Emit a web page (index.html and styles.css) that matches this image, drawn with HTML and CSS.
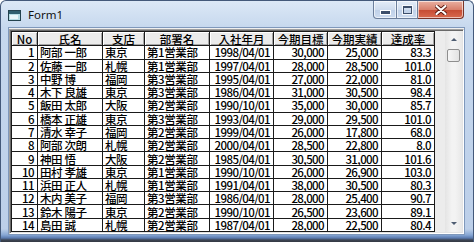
FILE: index.html
```html
<!DOCTYPE html>
<html lang="ja">

<head>
  <meta charset="UTF-8">
  <title>Form1</title>
  <link rel="stylesheet" href="styles.css">
</head>

<body>

  <div class="window">
    <div class="titlebar">
      <svg class="form-icon" width="13" height="11" viewBox="0 0 13 11">
        <rect x="0.5" y="0.5" width="12" height="10" fill="#b7dde4" stroke="#23424e"/>
        <rect x="1" y="1" width="11" height="3" fill="#2f5f6e"/>
        <rect x="2" y="5" width="8" height="4" fill="#e9f6f8"/>
      </svg>
      <span class="caption">Form1</span>
      <div class="caption-buttons">
        <div class="cbtn min"><span class="glyph-min"></span></div>
        <div class="cbtn max"><span class="glyph-max"></span></div>
        <div class="cbtn close">
          <svg width="12" height="10" viewBox="0 0 12 10">
            <path d="M1.5 1 L10.5 9 M10.5 1 L1.5 9" stroke="#5a1a10" stroke-width="4" stroke-linecap="round"/>
            <path d="M1.5 1 L10.5 9 M10.5 1 L1.5 9" stroke="#ffffff" stroke-width="2.2" stroke-linecap="round"/>
          </svg>
        </div>
      </div>
    </div>

    <div class="client">
      <div class="grid">
        <div class="cells">
          <table class="flex">
            <colgroup>
              <col style="width:26px">
              <col style="width:65px">
              <col style="width:42px">
              <col style="width:65px">
              <col style="width:64px">
              <col style="width:54px">
              <col style="width:54px">
              <col style="width:53px">
            </colgroup>
            <thead>
              <tr>
                <th>No</th><th>氏名</th><th>支店</th><th>部署名</th><th>入社年月</th><th>今期目標</th><th>今期実績</th><th>達成率</th>
              </tr>
            </thead>
            <tbody>
              <tr><td class="num">1</td><td>阿部 一郎</td><td>東京</td><td>第1営業部</td><td class="num">1998/04/01</td><td class="num">30,000</td><td class="num">25,000</td><td class="num">83.3</td></tr>
              <tr><td class="num">2</td><td>佐藤 一郎</td><td>札幌</td><td>第1営業部</td><td class="num">1997/04/01</td><td class="num">28,000</td><td class="num">28,500</td><td class="num">101.0</td></tr>
              <tr><td class="num">3</td><td>中野 博</td><td>福岡</td><td>第3営業部</td><td class="num">1995/04/01</td><td class="num">27,000</td><td class="num">22,000</td><td class="num">81.0</td></tr>
              <tr><td class="num">4</td><td>木下 良雄</td><td>東京</td><td>第3営業部</td><td class="num">1986/04/01</td><td class="num">31,000</td><td class="num">30,500</td><td class="num">98.4</td></tr>
              <tr><td class="num">5</td><td>飯田 太郎</td><td>大阪</td><td>第2営業部</td><td class="num">1990/10/01</td><td class="num">35,000</td><td class="num">30,000</td><td class="num">85.7</td></tr>
              <tr><td class="num">6</td><td>橋本 正雄</td><td>東京</td><td>第3営業部</td><td class="num">1993/04/01</td><td class="num">29,000</td><td class="num">29,500</td><td class="num">101.0</td></tr>
              <tr><td class="num">7</td><td>清水 幸子</td><td>福岡</td><td>第2営業部</td><td class="num">1999/04/01</td><td class="num">26,000</td><td class="num">17,800</td><td class="num">68.0</td></tr>
              <tr><td class="num">8</td><td>阿部 次朗</td><td>札幌</td><td>第2営業部</td><td class="num">2000/04/01</td><td class="num">28,500</td><td class="num">22,800</td><td class="num">8.0</td></tr>
              <tr><td class="num">9</td><td>神田 悟</td><td>大阪</td><td>第2営業部</td><td class="num">1985/04/01</td><td class="num">30,500</td><td class="num">31,000</td><td class="num">101.6</td></tr>
              <tr><td class="num">10</td><td>田村 孝雄</td><td>東京</td><td>第1営業部</td><td class="num">1990/10/01</td><td class="num">26,000</td><td class="num">26,900</td><td class="num">103.0</td></tr>
              <tr><td class="num">11</td><td>浜田 正人</td><td>札幌</td><td>第1営業部</td><td class="num">1991/04/01</td><td class="num">38,000</td><td class="num">30,500</td><td class="num">80.3</td></tr>
              <tr><td class="num">12</td><td>木内 美子</td><td>福岡</td><td>第3営業部</td><td class="num">1986/04/01</td><td class="num">28,000</td><td class="num">25,400</td><td class="num">90.7</td></tr>
              <tr><td class="num">13</td><td>鈴木 陽子</td><td>東京</td><td>第2営業部</td><td class="num">1990/10/01</td><td class="num">26,500</td><td class="num">23,600</td><td class="num">89.1</td></tr>
              <tr><td class="num">14</td><td>島田 誠</td><td>札幌</td><td>第2営業部</td><td class="num">1987/04/01</td><td class="num">28,000</td><td class="num">22,500</td><td class="num">80.4</td></tr>
            </tbody>
          </table>
        </div>

        <div class="vscroll">
          <div class="sbtn"><span class="arrow-up"></span></div>
          <div class="track">
            <div class="thumb"></div>
          </div>
          <div class="sbtn"><span class="arrow-down"></span></div>
        </div>
      </div>
    </div>
  </div>

</body>

</html>
```

FILE: styles.css
```css
body {
  margin: 0;
  background-color: #ffffff;
  font-family: "Noto Sans CJK JP", "Noto Sans", sans-serif;
  color: #000;
}

/* ventana */
.window {
  width: 474px;
  height: 242px;
  box-sizing: border-box;
  display: flex;
  flex-direction: column;
  padding: 0 8px 7px 7px;
  border: 1px solid #44597a;
  border-bottom: none;
  border-radius: 6px 6px 0 0;
  background: linear-gradient(#dce8f6 0, #c6d8ee 27px, #bccfe9 228px, #86a6d4 234px, #5b7bb0 237px, #3c4452 239px, #2f343c 242px);
}

.titlebar {
  height: 27px;
  display: flex;
  align-items: center;
}

.form-icon {
  margin-top: 2px;
}

.caption {
  margin-left: 7px;
  font-family: "Noto Sans", sans-serif;
  font-size: 11.5px;
  color: #111;
}

.caption-buttons {
  margin-left: auto;
  margin-right: 1px;
  align-self: flex-start;
  display: flex;
  height: 18px;
}

.cbtn {
  box-sizing: border-box;
  height: 18px;
  display: flex;
  align-items: center;
  justify-content: center;
  border: 1px solid #6c7f9c;
  border-top: none;
  box-shadow: inset 0 0 0 1px rgba(255, 255, 255, 0.6);
}

.cbtn.min {
  width: 24px;
  border-radius: 0 0 0 4px;
  background: linear-gradient(#e4edf8, #cfdcee 50%, #bfd0e8 51%, #cddcf0);
}

.cbtn.max {
  width: 21px;
  border-left: none;
  background: linear-gradient(#e4edf8, #cfdcee 50%, #bfd0e8 51%, #cddcf0);
}

.cbtn.close {
  width: 46px;
  border-left: none;
  border-color: #7a3428;
  border-radius: 0 0 4px 0;
  background: linear-gradient(#e9b0a2, #d8806c 50%, #c54a32 51%, #d86a4e);
}

.glyph-min {
  width: 9px;
  height: 3px;
  margin-top: 5px;
  background-color: #3d4f6b;
  border: 1px solid #ffffff;
}

.glyph-max {
  width: 7px;
  height: 5px;
  border: 1px solid #3d4f6b;
  border-top-width: 2px;
  outline: 1px solid rgba(255, 255, 255, 0.8);
}

/* area cliente */
.client {
  flex: 1;
  display: flex;
  flex-direction: column;
  padding-top: 1px;
  border: 1px solid #7f98bb;
  background-color: #f0f0f0;
}

.grid {
  flex: 1;
  display: flex;
  border: 1px solid;
  border-color: #a0a0a0 #ffffff #ffffff #a0a0a0;
  box-shadow: inset 1px 1px 0 #696969, inset -1px -1px 0 #e3e3e3;
  padding: 1px;
}

.cells {
  flex: 1;
  background-color: #ececec;
}

.flex {
  table-layout: fixed;
  width: 423px;
  border-collapse: collapse;
  font-size: 11.5px;
  font-weight: 500;
  line-height: 12px;
}

.flex th,
.flex td {
  padding: 0 2px;
  border: 1px solid #1a1a1a;
  white-space: nowrap;
  overflow: hidden;
}

.flex th {
  height: 13px;
  font-weight: 500;
  text-align: center;
  background-color: #ebebeb;
  box-shadow: inset 1px 1px 0 #ffffff, inset -1px -1px 0 #a6a6a6;
}

.flex tbody tr {
  height: 13.28px;
}

.flex td {
  background-color: #ffffff;
  text-align: left;
  letter-spacing: -0.4px;
}

.flex td.num {
  text-align: right;
  letter-spacing: -0.6px;
  padding-right: 3px;
}

/* barra de desplazamiento */
.vscroll {
  width: 17px;
  display: flex;
  flex-direction: column;
  background: linear-gradient(to right, #e4e4e4, #f3f3f3 40%, #f3f3f3 60%, #e8e8e8);
}

.sbtn {
  height: 17px;
  display: flex;
  align-items: center;
  justify-content: center;
}

.arrow-up {
  width: 0;
  height: 0;
  border-left: 3px solid transparent;
  border-right: 3px solid transparent;
  border-bottom: 3px solid #4e5d72;
}

.arrow-down {
  width: 0;
  height: 0;
  border-left: 3px solid transparent;
  border-right: 3px solid transparent;
  border-top: 3px solid #4e5d72;
}

.track {
  flex: 1;
  padding: 0 2px;
}

.thumb {
  height: 13px;
  margin-top: 1px;
  box-sizing: border-box;
  border: 1px solid #8e8e8e;
  border-radius: 2px;
  background: linear-gradient(to right, #f6f6f6, #e2e2e2);
}
```
